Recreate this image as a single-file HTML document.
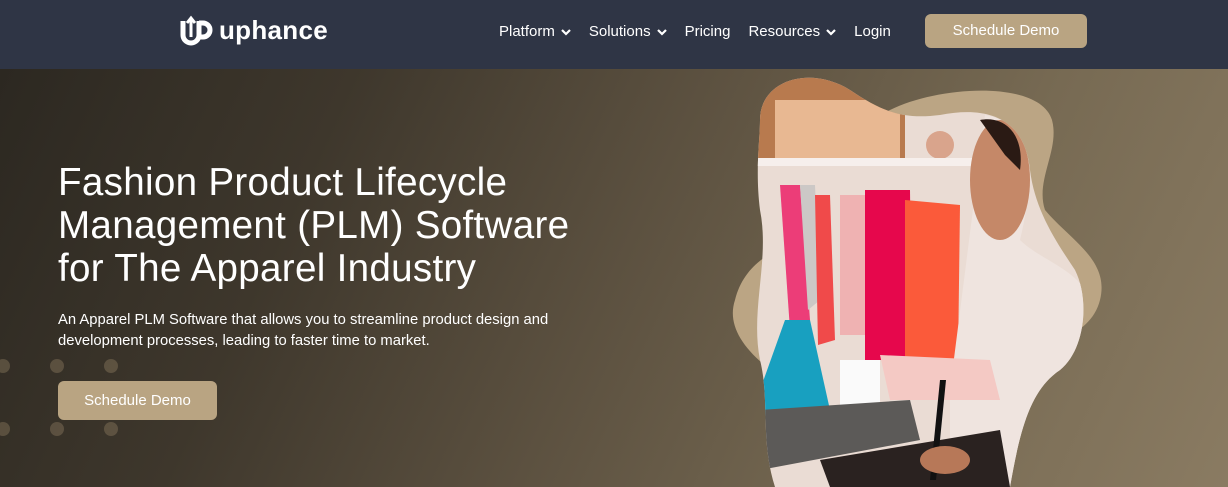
<!DOCTYPE html>
<html><head><meta charset="utf-8">
<style>
*{margin:0;padding:0;box-sizing:border-box}
body{width:1228px;height:487px;overflow:hidden;font-family:"Liberation Sans",sans-serif;background:#5a4f3f;position:relative}
.nav{position:absolute;left:0;top:0;width:1228px;height:69px;background:#2f3545;z-index:3}
.logo{position:absolute;left:179px;top:15px;display:flex;align-items:center;color:#fff}
.logo span{font-size:26px;font-weight:bold;margin-left:6px;letter-spacing:0.3px;position:relative;top:-2px}
.menu{position:absolute;top:23px;left:499px;color:#fff;font-size:15px;display:flex}
.menu div{margin-right:18px;white-space:nowrap}
.menu svg{margin-left:6px;vertical-align:middle}
.btn{position:absolute;background:#b9a482;color:#fff;border-radius:6px;text-align:center;font-size:15px}
.hero{position:absolute;left:0;top:69px;width:1228px;height:418px;background:linear-gradient(115deg,#2c2821 0%,#3e372c 25%,#5c5140 50%,#776a53 75%,#8a7b62 100%)}
h1{position:absolute;left:58px;top:161px;color:#fff;font-size:38.6px;font-weight:normal;line-height:43px;letter-spacing:0.3px}
p.sub{position:absolute;left:58px;top:310px;color:#fff;font-size:14.8px;line-height:21px}
.dot{position:absolute;width:14px;height:14px;border-radius:50%;background:rgba(160,140,110,0.35)}
</style></head><body>
<div class="hero"></div>
<div class="nav">
  <div class="logo">
    <svg width="34" height="34" viewBox="0 0 34 34"><path d="M4 6 V20 a8 8 0 0 0 16 0 V6" fill="none" stroke="#fff" stroke-width="5"/><path d="M12 22 V4 M8 8 L12 3 L16 8" fill="none" stroke="#fff" stroke-width="3"/><path d="M20 8 h4 a7 7 0 0 1 0 14 h-4" fill="none" stroke="#fff" stroke-width="5"/></svg>
    <span>uphance</span>
  </div>
  <div class="menu">
    <div>Platform<svg width="10" height="8" viewBox="0 0 10 8"><path d="M1 2 L5 6 L9 2" stroke="#fff" stroke-width="2.2" fill="none"/></svg></div>
    <div>Solutions<svg width="10" height="8" viewBox="0 0 10 8"><path d="M1 2 L5 6 L9 2" stroke="#fff" stroke-width="2.2" fill="none"/></svg></div>
    <div>Pricing</div>
    <div>Resources<svg width="10" height="8" viewBox="0 0 10 8"><path d="M1 2 L5 6 L9 2" stroke="#fff" stroke-width="2.2" fill="none"/></svg></div>
    <div>Login</div>
  </div>
  <div class="btn" style="left:925px;top:14px;width:162px;height:34px;line-height:34px">Schedule Demo</div>
</div>
<h1>Fashion Product Lifecycle<br>Management (PLM) Software<br>for The Apparel Industry</h1>
<p class="sub">An Apparel PLM Software that allows you to streamline product design and<br>development processes, leading to faster time to market.</p>
<div class="btn" style="left:58px;top:381px;width:159px;height:39px;line-height:39px">Schedule Demo</div>
<div class="dot" style="left:-4px;top:359px"></div><div class="dot" style="left:50px;top:359px"></div><div class="dot" style="left:104px;top:359px"></div>
<div class="dot" style="left:-4px;top:422px"></div><div class="dot" style="left:50px;top:422px"></div><div class="dot" style="left:104px;top:422px"></div>
<svg style="position:absolute;left:700px;top:60px" width="528" height="427" viewBox="0 0 528 427">
  <defs>
    <clipPath id="c"><path d="M60 60 C60 20 110 5 150 30 C180 50 200 60 240 55 C290 45 325 60 330 110 C335 150 355 180 375 210 C390 240 385 290 360 310 C330 330 320 370 310 427 L75 427 C60 380 70 340 60 300 C50 250 70 200 60 150 C55 110 60 80 60 60Z"/></clipPath>
  </defs>
  <path d="M190 50 C240 25 340 20 352 60 C360 90 335 120 345 150 C370 180 410 200 400 240 C390 280 340 280 330 310 C320 350 320 380 280 385 C240 390 150 360 100 330 C50 300 25 270 35 240 C45 200 80 185 120 175 C160 160 130 80 190 50Z" fill="#bba584"/>
  <g clip-path="url(#c)">
    <rect x="0" y="0" width="528" height="427" fill="#eadcd4"/>
    <rect x="55" y="0" width="150" height="100" fill="#b87a4e"/>
    <rect x="75" y="40" width="125" height="60" fill="#e8b892"/>
    <circle cx="240" cy="85" r="14" fill="#d9a48c"/>
    <rect x="55" y="98" width="240" height="8" fill="#f6efec"/>
    <path d="M80 125 L100 125 L110 260 L90 270Z" fill="#ec3d78"/>
    <path d="M100 125 L115 125 L120 240 L108 250Z" fill="#ccc8c6"/>
    <path d="M115 135 L130 135 L135 280 L118 285Z" fill="#f04a4a"/>
    <path d="M140 135 L165 135 L168 275 L140 275Z" fill="#efb2b2"/>
    <path d="M165 130 L210 130 L212 300 L165 300Z" fill="#e6074c"/>
    <path d="M205 140 L260 145 L258 300 L205 300Z" fill="#fb5a3a"/>
    <path d="M285 55 C320 60 340 100 320 180 C340 200 380 210 390 240 L390 427 L250 427 L250 330 Z" fill="#efe4df"/>
    <ellipse cx="300" cy="120" rx="30" ry="60" fill="#c58868"/>
    <path d="M280 60 C305 55 325 75 320 110 L305 95Z" fill="#2a1a14"/>
    <path d="M60 330 L85 260 L110 260 L130 350 L60 360Z" fill="#18a0c0"/>
    <rect x="140" y="300" width="40" height="45" fill="#fafafa"/>
    <path d="M180 295 L290 300 L300 340 L190 340Z" fill="#f4c9c4"/>
    <path d="M60 350 L210 340 L220 380 L60 410Z" fill="#5c5a58"/>
    <path d="M120 400 L300 370 L310 427 L130 427Z" fill="#2a2220"/>
    <path d="M240 320 L246 320 L236 420 L230 420Z" fill="#111"/>
    <ellipse cx="245" cy="400" rx="25" ry="14" fill="#b77858"/>
  </g>
</svg>
</body></html>
